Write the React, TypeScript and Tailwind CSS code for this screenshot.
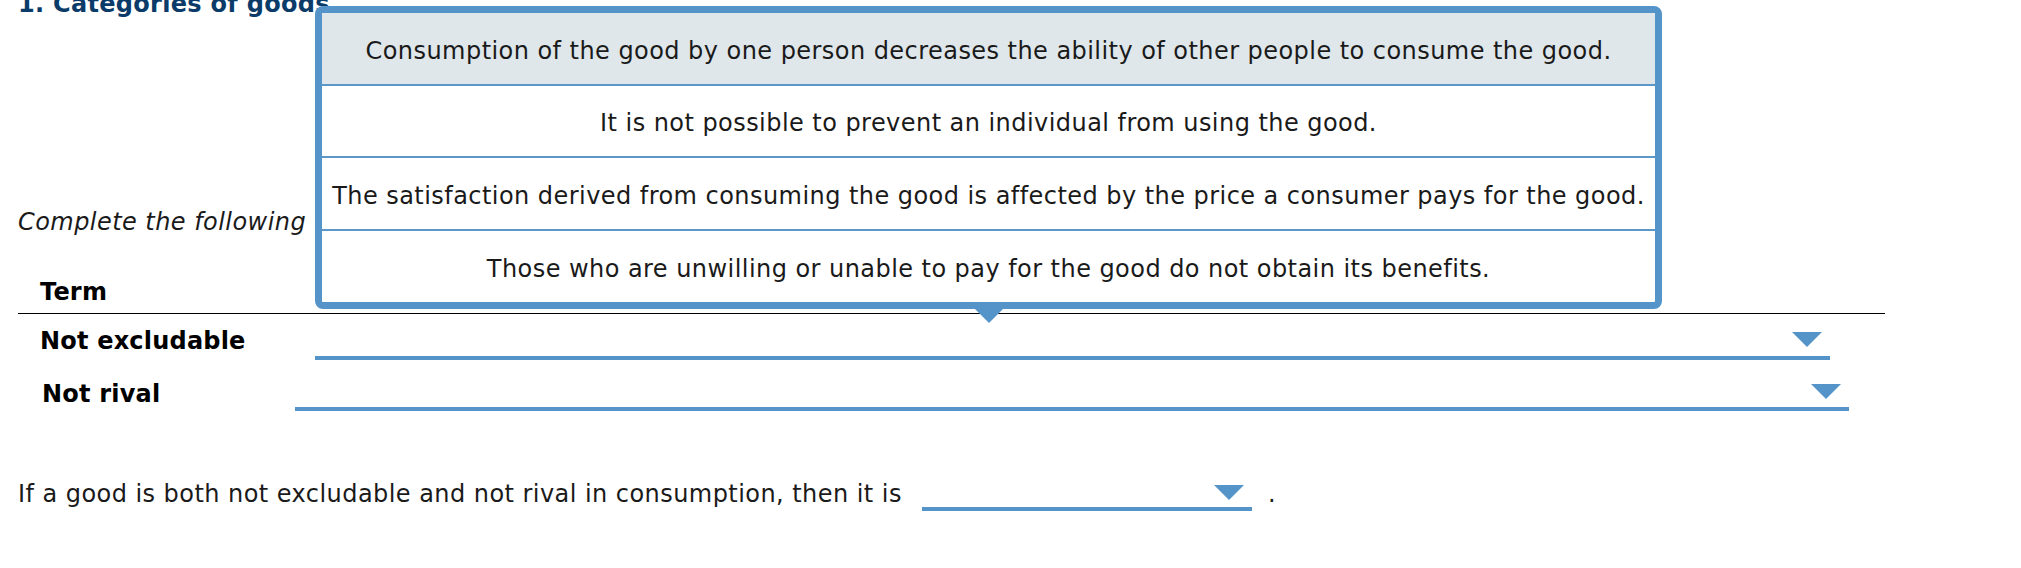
import React from "react";

const BLUE = "#5594c8";

function Tri({ className = "" }: { className?: string }) {
  return (
    <svg width="30" height="15" viewBox="0 0 30 15" className={className}>
      <polygon points="0,0 30,0 15,15" fill={BLUE} />
    </svg>
  );
}

function Dropdown({ w, h }: { w: string; h: string }) {
  return (
    <div className={`flex justify-end items-start border-b-4 border-[#5594c8] pr-[8px] ${w} ${h}`}>
      <Tri />
    </div>
  );
}

const options = [
  "Consumption of the good by one person decreases the ability of other people to consume the good.",
  "It is not possible to prevent an individual from using the good.",
  "The satisfaction derived from consuming the good is affected by the price a consumer pays for the good.",
  "Those who are unwilling or unable to pay for the good do not obtain its benefits.",
];

const rowHeights = ["h-[73px]", "h-[72px]", "h-[73px]", "h-[71px]"];

export default function App() {
  return (
    <div
      className="relative w-[2021px] h-[568px] overflow-hidden bg-white text-[24px] leading-[28px] tracking-[0.45px] text-[#1a1a1a]"
      style={{ fontFamily: '"DejaVu Sans", Verdana, sans-serif' }}
    >
      <div className="flex flex-col pl-[18px]">
        <h1 className="mt-[-10px] h-[28px] font-bold tracking-[0.3px] text-[#0b3b69] whitespace-nowrap">1. Categories of goods</h1>
        <p className="mt-[190px] h-[28px] italic whitespace-nowrap">
          Complete the following table by matching each term with its definition.
        </p>

        <div className="grid grid-cols-[241px_1626px] w-[1867px]">
          <div className="col-span-2 grid grid-cols-[241px_1626px] border-b border-black pt-[42px] h-[78px]">
            <div className="pl-[22px] font-bold tracking-[0.2px] text-black">Term</div>
            <div />
          </div>

          <div className="h-[53px] pt-[13px] pl-[22px] font-bold tracking-[0.2px] text-black whitespace-nowrap">Not excludable</div>
          <div className="h-[53px] flex justify-center pt-[18px]">
            <Dropdown w="w-[1515px]" h="h-[28px]" />
          </div>

          <div className="h-[53px] pt-[13px] pl-[24px] font-bold tracking-[0.2px] text-black whitespace-nowrap">Not rival</div>
          <div className="h-[53px] flex justify-center pt-[17px]">
            <Dropdown w="w-[1554px]" h="h-[27px]" />
          </div>
        </div>

        <div className="mt-[60px] flex items-start h-[40px]">
          <span className="whitespace-nowrap">If a good is both not excludable and not rival in consumption, then it is</span>
          <div className="ml-[20px] mt-[5px]">
            <Dropdown w="w-[330px]" h="h-[26px]" />
          </div>
          <span className="ml-[16px]">.</span>
        </div>
      </div>

      <div className="absolute left-[315px] top-[6px] w-[1347px] h-[303px] rounded-[8px] border-[7px] border-[#5594c8] bg-white">
        <div className="flex flex-col overflow-hidden rounded-[2px]">
          {options.map((o, i) => (
            <div
              key={i}
              className={`flex items-center justify-center pt-[4px] whitespace-nowrap ${rowHeights[i]} ${
                i === 0 ? "bg-[#dfe7ea]" : ""
              } ${i < 3 ? "border-b-2 border-[#5b97c9]" : ""}`}
            >
              {o}
            </div>
          ))}
        </div>
        <div className="absolute left-1/2 -translate-x-1/2 top-[295px]">
          <Tri />
        </div>
      </div>
    </div>
  );
}
